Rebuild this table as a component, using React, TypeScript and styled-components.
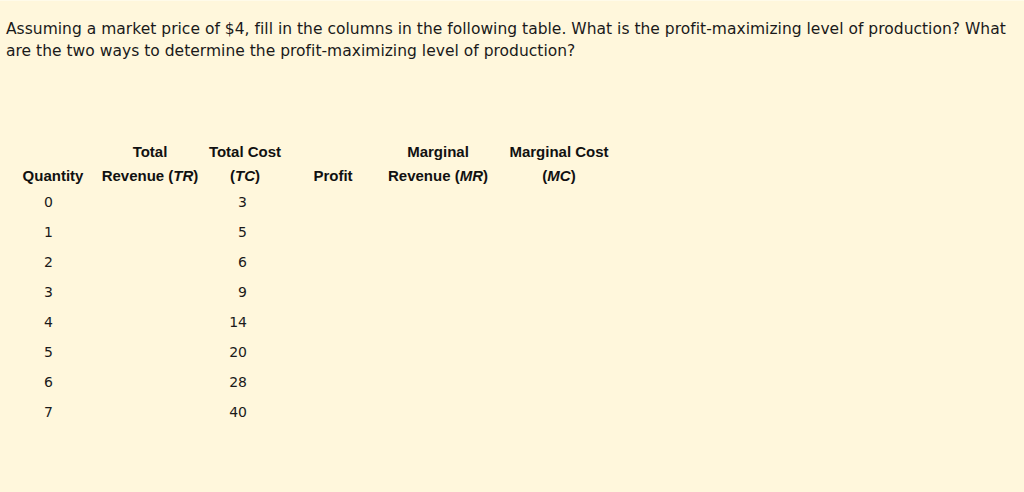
import React from 'react';
import styled, { createGlobalStyle } from 'styled-components';

const GlobalStyle = createGlobalStyle`
  html, body {
    margin: 0;
    padding: 0;
    background: #fff7dc;
  }
`;

const Page = styled.div`
  box-sizing: border-box;
  width: 1024px;
  height: 492px;
  background: #fff7dc;
  border-top: 1px solid #fffbea;
  padding: 18px 6px 0 6px;
  color: #1a1a1a;
  overflow: hidden;
`;

const Question = styled.p`
  margin: 0;
  font-family: Verdana, 'DejaVu Sans', sans-serif;
  font-size: 15.5px;
  letter-spacing: 0.02px;
  line-height: 21.5px;
  white-space: nowrap;
`;

const Table = styled.div`
  margin-top: 78px;
  display: flex;
  flex-direction: column;
`;

const Row = styled.div`
  display: grid;
  grid-template-columns: 94px 100px 90px 86px 124px 118px;
  height: 30px;
  align-items: center;
`;

const HeaderRow = styled(Row)`
  box-sizing: border-box;
  height: 47px;
  padding-bottom: 4px;
  align-items: end;
`;

const HeadCell = styled.div`
  display: flex;
  flex-direction: column;
  align-items: center;
  font-family: 'Liberation Sans', Arial, sans-serif;
  font-weight: bold;
  font-size: 15px;
  line-height: 24px;
  color: #111;
  white-space: nowrap;
  i {
    font-style: italic;
  }
`;

const DataCell = styled.div<{ $align?: 'left' | 'right'; $pad?: number }>`
  font-family: Verdana, 'DejaVu Sans', sans-serif;
  font-size: 14px;
  text-align: ${(p) => p.$align || 'left'};
  padding-left: ${(p) => (p.$align === 'right' ? 0 : p.$pad || 0)}px;
  padding-right: ${(p) => (p.$align === 'right' ? p.$pad || 0 : 0)}px;
`;

const totalCost = [3, 5, 6, 9, 14, 20, 28, 40];

export default function App() {
  return (
    <>
      <GlobalStyle />
      <Page>
        <Question>
          Assuming a market price of $4, fill in the columns in the following table. What is the profit-maximizing level of production? What
          <br />
          are the two ways to determine the profit-maximizing level of production?
        </Question>
        <Table>
          <HeaderRow>
            <HeadCell>
              <span>Quantity</span>
            </HeadCell>
            <HeadCell>
              <span>Total</span>
              <span>
                Revenue (<i>TR</i>)
              </span>
            </HeadCell>
            <HeadCell>
              <span>Total Cost</span>
              <span>
                (<i>TC</i>)
              </span>
            </HeadCell>
            <HeadCell>
              <span>Profit</span>
            </HeadCell>
            <HeadCell>
              <span>Marginal</span>
              <span>
                Revenue (<i>MR</i>)
              </span>
            </HeadCell>
            <HeadCell>
              <span>Marginal Cost</span>
              <span>
                (<i>MC</i>)
              </span>
            </HeadCell>
          </HeaderRow>
          {totalCost.map((tc, q) => (
            <Row key={q}>
              <DataCell $pad={38}>{q}</DataCell>
              <DataCell />
              <DataCell $align="right" $pad={43}>
                {tc}
              </DataCell>
              <DataCell />
              <DataCell />
              <DataCell />
            </Row>
          ))}
        </Table>
      </Page>
    </>
  );
}
